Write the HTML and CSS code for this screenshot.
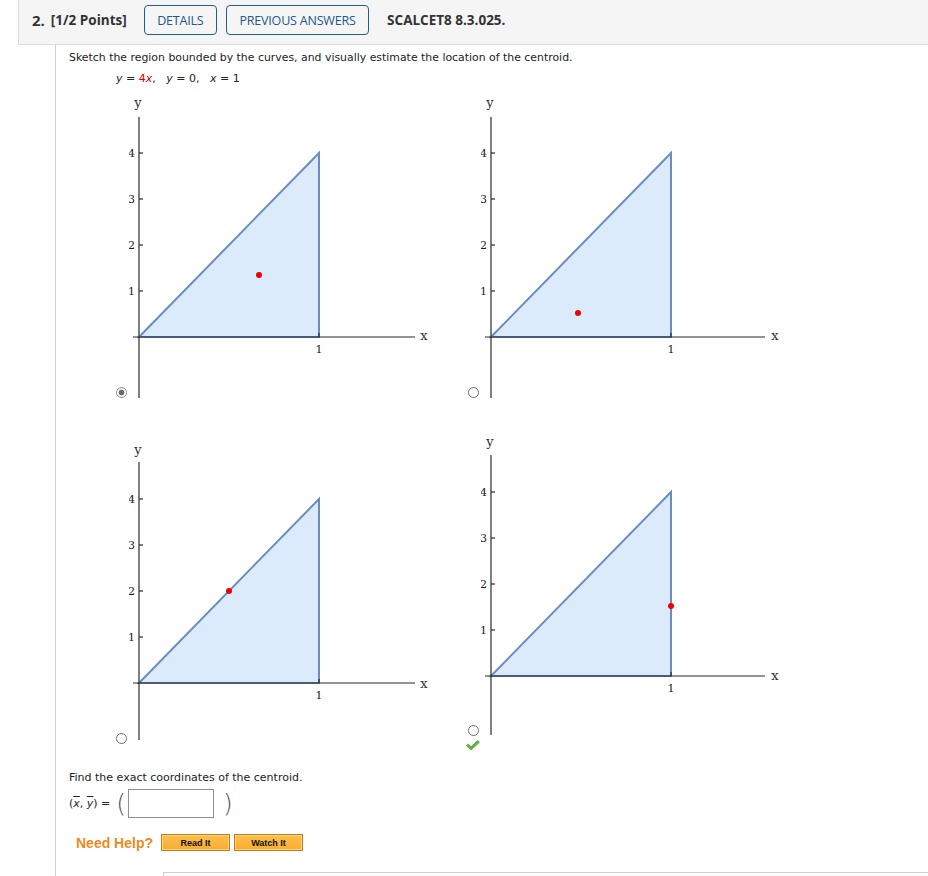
FILE: index.html
```html
<!DOCTYPE html>
<html lang="en">
<head>
<meta charset="utf-8">
<title>SCALCET8 8.3.025</title>
<link rel="stylesheet" href="styles.css">
</head>
<body>
<div class="question">
  <div class="q-header">
    <span class="q-num">2.</span>
    <span class="q-points">[1/2 Points]</span>
    <span class="btn">DETAILS</span>
    <span class="btn">PREVIOUS ANSWERS</span>
    <span class="q-code">SCALCET8 8.3.025.</span>
  </div>
  <div class="q-body">
    <p class="prompt">Sketch the region bounded by the curves, and visually estimate the location of the centroid.</p>
    <p class="equation"><i>y</i> = <span class="red">4<i>x</i></span>,&nbsp;&nbsp; <i>y</i> = 0,&nbsp;&nbsp; <i>x</i> = 1</p>

    <div class="graphs">
      <div class="choice">
        <div class="radio-col"><span class="radio checked"></span></div>
        <svg class="plot" width="320" height="310" viewBox="0 0 320 310">
          <polygon class="region" points="10,245 190,61 190,245"/>
          <line class="axis" x1="10" y1="25" x2="10" y2="306"/>
          <line class="axis" x1="4" y1="245" x2="286" y2="245"/>
          <line class="axis" x1="10" y1="199" x2="14" y2="199"/>
          <line class="axis" x1="10" y1="153" x2="14" y2="153"/>
          <line class="axis" x1="10" y1="107" x2="14" y2="107"/>
          <line class="axis" x1="10" y1="61" x2="14" y2="61"/>
          <line class="axis" x1="190" y1="245" x2="190" y2="241"/>
          <text class="tick" x="6" y="203" text-anchor="end">1</text>
          <text class="tick" x="6" y="157" text-anchor="end">2</text>
          <text class="tick" x="6" y="111" text-anchor="end">3</text>
          <text class="tick" x="6" y="65" text-anchor="end">4</text>
          <text class="tick" x="190" y="261" text-anchor="middle">1</text>
          <text class="alabel" x="9" y="15" text-anchor="middle">y</text>
          <text class="alabel" x="295" y="248" text-anchor="middle">x</text>
          <circle class="dot" cx="130" cy="183" r="3"/>
        </svg>
      </div>

      <div class="choice">
        <div class="radio-col"><span class="radio"></span></div>
        <svg class="plot" width="320" height="310" viewBox="0 0 320 310">
          <polygon class="region" points="10,245 190,61 190,245"/>
          <line class="axis" x1="10" y1="25" x2="10" y2="306"/>
          <line class="axis" x1="4" y1="245" x2="284" y2="245"/>
          <line class="axis" x1="10" y1="199" x2="14" y2="199"/>
          <line class="axis" x1="10" y1="153" x2="14" y2="153"/>
          <line class="axis" x1="10" y1="107" x2="14" y2="107"/>
          <line class="axis" x1="10" y1="61" x2="14" y2="61"/>
          <line class="axis" x1="190" y1="245" x2="190" y2="241"/>
          <text class="tick" x="6" y="203" text-anchor="end">1</text>
          <text class="tick" x="6" y="157" text-anchor="end">2</text>
          <text class="tick" x="6" y="111" text-anchor="end">3</text>
          <text class="tick" x="6" y="65" text-anchor="end">4</text>
          <text class="tick" x="190" y="261" text-anchor="middle">1</text>
          <text class="alabel" x="9" y="15" text-anchor="middle">y</text>
          <text class="alabel" x="294" y="248" text-anchor="middle">x</text>
          <circle class="dot" cx="97" cy="221" r="3"/>
        </svg>
      </div>

      <div class="choice">
        <div class="radio-col"><span class="radio"></span></div>
        <svg class="plot" width="320" height="318" viewBox="0 0 320 318">
          <polygon class="region" points="10,253 190,69 190,253"/>
          <line class="axis" x1="10" y1="32" x2="10" y2="310"/>
          <line class="axis" x1="4" y1="253" x2="286" y2="253"/>
          <line class="axis" x1="10" y1="207" x2="14" y2="207"/>
          <line class="axis" x1="10" y1="161" x2="14" y2="161"/>
          <line class="axis" x1="10" y1="115" x2="14" y2="115"/>
          <line class="axis" x1="10" y1="69" x2="14" y2="69"/>
          <line class="axis" x1="190" y1="253" x2="190" y2="249"/>
          <text class="tick" x="6" y="211" text-anchor="end">1</text>
          <text class="tick" x="6" y="165" text-anchor="end">2</text>
          <text class="tick" x="6" y="119" text-anchor="end">3</text>
          <text class="tick" x="6" y="73" text-anchor="end">4</text>
          <text class="tick" x="190" y="269" text-anchor="middle">1</text>
          <text class="alabel" x="9" y="24" text-anchor="middle">y</text>
          <text class="alabel" x="295" y="258" text-anchor="middle">x</text>
          <circle class="dot" cx="100" cy="161" r="3"/>
        </svg>
      </div>

      <div class="choice">
        <div class="radio-col radio-col--marked">
          <span class="radio"></span>
          <svg class="check" width="14" height="11" viewBox="0 0 14 11"><path d="M0 5.5 L2.2 3.4 L5 6.2 L11.6 0 L14 2.2 L5 10.6 Z"/></svg>
        </div>
        <svg class="plot" width="320" height="318" viewBox="0 0 320 318">
          <polygon class="region" points="10,246 190,62 190,246"/>
          <line class="axis" x1="10" y1="25" x2="10" y2="305"/>
          <line class="axis" x1="4" y1="246" x2="284" y2="246"/>
          <line class="axis" x1="10" y1="200" x2="14" y2="200"/>
          <line class="axis" x1="10" y1="154" x2="14" y2="154"/>
          <line class="axis" x1="10" y1="108" x2="14" y2="108"/>
          <line class="axis" x1="10" y1="62" x2="14" y2="62"/>
          <line class="axis" x1="190" y1="246" x2="190" y2="242"/>
          <text class="tick" x="6" y="204" text-anchor="end">1</text>
          <text class="tick" x="6" y="158" text-anchor="end">2</text>
          <text class="tick" x="6" y="112" text-anchor="end">3</text>
          <text class="tick" x="6" y="66" text-anchor="end">4</text>
          <text class="tick" x="190" y="262" text-anchor="middle">1</text>
          <text class="alabel" x="9" y="16" text-anchor="middle">y</text>
          <text class="alabel" x="294" y="250" text-anchor="middle">x</text>
          <circle class="dot" cx="190" cy="176" r="3"/>
        </svg>
      </div>
    </div>

    <p class="find">Find the exact coordinates of the centroid.</p>
    <div class="answer">
      <span class="coords">(<i class="ov">x</i>, <i class="ov">y</i>) =</span>
      <span class="paren">(</span>
      <span class="answer-box"></span>
      <span class="paren">)</span>
    </div>

    <div class="help">
      <span class="help-label">Need Help?</span>
      <span class="help-btn">Read It</span>
      <span class="help-btn">Watch It</span>
    </div>

    <div class="next-box"></div>
  </div>
</div>
</body>
</html>
```

FILE: styles.css
```css
* { box-sizing: border-box; }

html, body {
  margin: 0;
  padding: 0;
  background: #ffffff;
  overflow: hidden;
}

body {
  font-family: "DejaVu Sans", Verdana, sans-serif;
  color: #222;
  width: 928px;
  height: 876px;
}

.question {
  margin-left: 18px;
}

.q-header {
  display: flex;
  align-items: center;
  height: 45px;
  padding: 0 0 4px 13px;
  background: #f5f5f5;
  border-left: 1px solid #dcdcdc;
  border-bottom: 1px solid #dcdcdc;
  font-family: "Open Sans", "Noto Sans", sans-serif;
  color: #333;
}

.q-num {
  font-size: 15px;
  font-weight: 700;
  margin-right: 6px;
}

.q-points {
  font-size: 13.5px;
  font-weight: 700;
  margin-right: 17px;
}

.btn {
  display: inline-flex;
  align-items: center;
  justify-content: center;
  height: 30px;
  padding: 0 12.5px;
  margin-right: 9px;
  border: 1px solid #225d8f;
  border-radius: 4px;
  font-size: 12.5px;
  color: #22598a;
  letter-spacing: -0.2px;
}

.q-code {
  margin-left: 9px;
  font-size: 13.5px;
  font-weight: 700;
  color: #333;
}

.q-body {
  margin-left: 37px;
  border-left: 1px solid #cfcfcf;
  padding-left: 13px;
  height: 831px;
}

.prompt {
  margin: 0;
  padding-top: 6px;
  font-size: 10.9px;
  line-height: 14px;
}

.equation {
  margin: 7px 0 0 0;
  padding-left: 47px;
  font-size: 11px;
  line-height: 14px;
}

.equation i {
  font-style: italic;
}

.red { color: #e00000; }

.graphs {
  display: grid;
  grid-template-columns: 352px 352px;
  row-gap: 28px;
  margin: 6px 0 0 45px;
}

.choice {
  display: flex;
  align-items: flex-end;
}

.radio-col {
  position: relative;
  width: 15px;
  padding-left: 2px;
  margin-bottom: 4px;
}

.radio-col--marked {
  margin-bottom: 12px;
}

.radio {
  display: block;
  width: 11px;
  height: 11px;
  border: 1px solid #6f6f6f;
  border-radius: 50%;
  background: #fff;
}

.radio.checked {
  border-color: #8a8a8a;
  background: radial-gradient(circle, #6a6a6a 0, #6a6a6a 2.6px, #fff 3.2px, #fff 100%);
}

.check {
  position: absolute;
  left: 0;
  top: 15px;
  fill: #62b048;
}

.plot {
  display: block;
}

.region {
  fill: #dcebfc;
  stroke: #6a8cc4;
  stroke-width: 2;
}

.axis {
  stroke: #2a2a2a;
  stroke-width: 1.2;
}

.tick {
  font-family: "DejaVu Serif", "Liberation Serif", serif;
  font-size: 11px;
  fill: #1a1a1a;
}

.alabel {
  font-family: "DejaVu Serif", "Liberation Serif", serif;
  font-size: 13px;
  fill: #333;
}

.dot {
  fill: #f20000;
}

.find {
  margin: 23px 0 0 0;
  font-size: 11px;
  line-height: 14px;
}

.answer {
  display: flex;
  align-items: center;
  height: 29px;
  margin-top: 4px;
  font-size: 11px;
}

.coords i {
  font-style: italic;
}

.ov {
  text-decoration: overline;
}

.paren {
  font-family: "DejaVu Sans", sans-serif;
  font-size: 25px;
  font-weight: 300;
  color: #555;
  line-height: 29px;
  margin: 0 2px 0 6px;
}

.paren + .answer-box + .paren {
  margin: 0 0 0 9px;
}

.answer-box {
  display: block;
  width: 86px;
  height: 29px;
  border: 1px solid #8e8e8e;
  background: #fff;
}

.help {
  display: flex;
  align-items: center;
  margin-top: 16px;
  padding-left: 7px;
  height: 17px;
}

.help-label {
  font-family: "Liberation Sans", Arial, sans-serif;
  font-size: 14px;
  font-weight: 700;
  color: #ec8a1d;
  margin-right: 8px;
}

.help-btn {
  display: flex;
  align-items: center;
  justify-content: center;
  width: 69px;
  height: 17px;
  margin-right: 4px;
  border: 1px solid #c77d1e;
  box-shadow: inset 0 0 0 1px #fdd27a;
  background: linear-gradient(#fcc04f, #f9ad2e);
  font-family: "Liberation Sans", Arial, sans-serif;
  font-size: 9px;
  font-weight: 700;
  color: #111;
}

.next-box {
  margin: 21px 0 0 94px;
  height: 20px;
  border-top: 1px solid #cfcfcf;
  border-left: 1px solid #cfcfcf;
}
```
